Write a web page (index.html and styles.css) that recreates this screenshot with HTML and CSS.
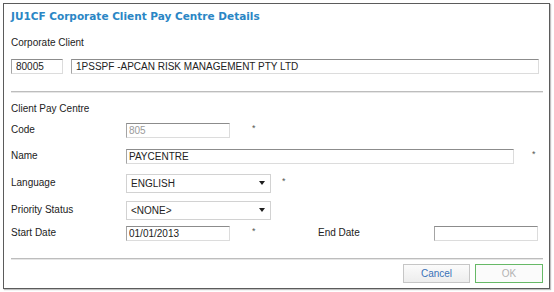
FILE: index.html
```html
<!DOCTYPE html>
<html lang="en">
<head>
  <meta charset="UTF-8">
  <title>JU1CF Corporate Client Pay Centre Details</title>
  <link rel="stylesheet" href="styles.css">
</head>
<body>
  <div class="dialog">
    <h1 class="title">JU1CF Corporate Client Pay Centre Details</h1>

    <div class="section-label first">Corporate Client</div>
    <div class="client-row">
      <input class="box client-code" type="text" value="80005" readonly>
      <input class="box client-name" type="text" value="1PSSPF -APCAN RISK MANAGEMENT PTY LTD" readonly>
    </div>

    <div class="divider"></div>

    <div class="section-label">Client Pay Centre</div>
    <div class="form">
      <div class="row">
        <div class="label">Code</div>
        <input class="box field-short disabled" type="text" value="805" readonly>
        <span class="req req-short">*</span>
      </div>
      <div class="row">
        <div class="label">Name</div>
        <input class="box field-long" type="text" value="PAYCENTRE" readonly>
        <span class="req req-long">*</span>
      </div>
      <div class="row row-tall">
        <div class="label">Language</div>
        <div class="select"><span>ENGLISH</span><span class="arrow"></span></div>
        <span class="req req-select">*</span>
      </div>
      <div class="row">
        <div class="label">Priority Status</div>
        <div class="select"><span>&lt;NONE&gt;</span><span class="arrow"></span></div>
      </div>
      <div class="row row-last">
        <div class="label">Start Date</div>
        <input class="box field-short" type="text" value="01/01/2013" readonly>
        <span class="req req-short">*</span>
        <div class="label end-label">End Date</div>
        <input class="box field-short end-date" type="text" value="" readonly>
      </div>
    </div>

    <div class="divider bottom"></div>

    <div class="buttons">
      <button class="btn cancel">Cancel</button>
      <button class="btn ok" disabled>OK</button>
    </div>
  </div>
</body>
</html>
```

FILE: styles.css
```css
body {
  margin: 0;
  background: #fff;
  font-family: "Liberation Sans", Arial, sans-serif;
  font-size: 10px;
  color: #222;
}
.dialog {
  margin: 3px;
  width: 547px;
  height: 286px;
  box-sizing: border-box;
  border: 1px solid #5b5b5b;
  box-shadow: 1px 1px 1px rgba(0,0,0,0.25);
  padding: 5px 6px 0 7px;
}
.title {
  margin: 0;
  font-family: "DejaVu Sans", Verdana, sans-serif;
  font-size: 10.5px;
  line-height: 14px;
  font-weight: bold;
  color: #2a86c5;
}
.section-label {
  margin-top: 10px;
  line-height: 12px;
  color: #222;
}
.section-label.first {
  margin-top: 14px;
}
.client-row {
  display: flex;
  gap: 8px;
  margin-top: 10px;
}
.box {
  display: block;
  height: 15px;
  box-sizing: border-box;
  margin: 0;
  padding: 0 2px;
  border: 1px solid #dcdcdc;
  border-top-color: #8c8c8c;
  border-left-color: #a4a4a4;
  background: #fff;
  font-family: "Liberation Sans", Arial, sans-serif;
  font-size: 10px;
  color: #222;
  outline: none;
}
.client-code {
  width: 52px;
  padding-left: 4px;
}
.client-name {
  width: 468px;
  padding-left: 4px;
}
.divider {
  margin-top: 17px;
  height: 0;
  border-top: 1px solid #bdbdbd;
  border-bottom: 1px solid #e6e6e6;
}
.divider.bottom {
  margin-top: 15px;
}
.form {
  margin-top: 2px;
}
.row {
  display: flex;
  align-items: center;
  height: 26px;
}
.row-tall {
  height: 28px;
}
.row-last {
  height: 20px;
}
.label {
  width: 115px;
  line-height: 12px;
  margin-bottom: 1px;
  flex-shrink: 0;
}
.field-short {
  width: 104px;
}
.field-long {
  width: 388px;
}
.disabled {
  color: #9a9a9a;
}
.select {
  display: flex;
  align-items: center;
  justify-content: space-between;
  width: 145px;
  height: 19px;
  box-sizing: border-box;
  padding: 0 5px 0 4px;
  border: 1px solid #d2d2d2;
  background: #fff;
}
.arrow {
  width: 0;
  height: 0;
  border-left: 3px solid transparent;
  border-right: 3px solid transparent;
  border-top: 4px solid #1e1e1e;
}
.req {
  font-size: 9px;
  line-height: 12px;
  margin-bottom: 4px;
  color: #555;
  width: 6px;
}
.req-short {
  margin-left: 22px;
}
.req-long {
  margin-left: 18px;
}
.req-select {
  margin-left: 11px;
}
.end-label {
  width: auto;
  margin-left: 60px;
}
.end-date {
  margin-left: auto;
  margin-right: 5px;
}
.buttons {
  display: flex;
  justify-content: flex-end;
  gap: 5px;
  margin-top: 4px;
}
.btn {
  width: 67px;
  height: 19px;
  box-sizing: border-box;
  padding: 0;
  font-family: "Liberation Sans", Arial, sans-serif;
  font-size: 10px;
  cursor: pointer;
}
.cancel {
  border: 1px solid #c6c6c6;
  background: linear-gradient(to bottom, #fbfbfb, #ededed);
  color: #3a72b8;
}
.ok {
  width: 68px;
  border: 1px solid #67b967;
  background: #fbfbfb;
  color: #b3b3b3;
  cursor: default;
}
```
